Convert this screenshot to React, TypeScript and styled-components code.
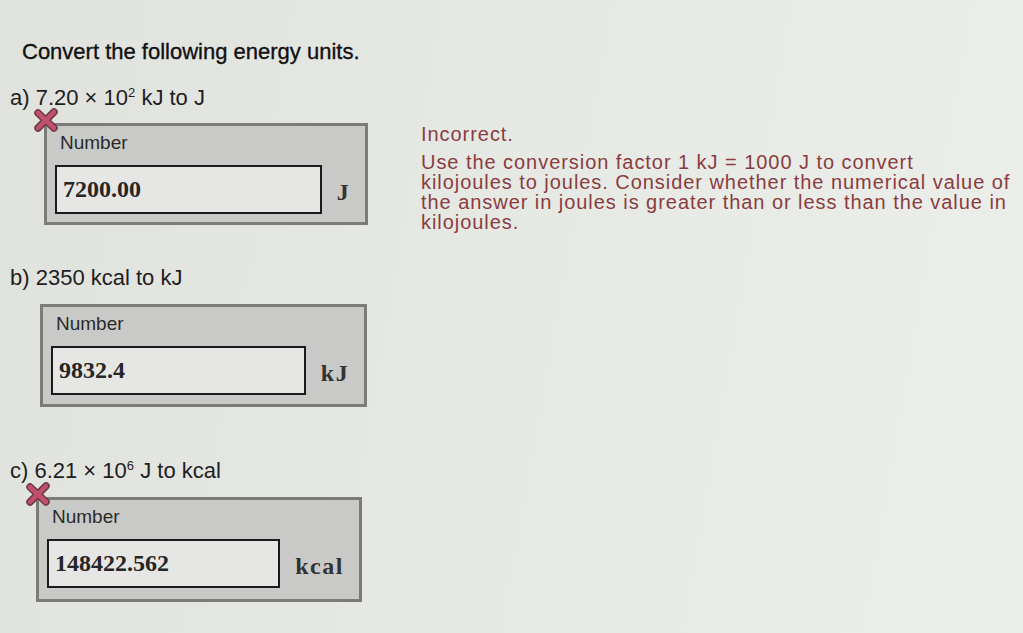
import React from "react";
import styled, { createGlobalStyle } from "styled-components";

const Global = createGlobalStyle`
  html, body { margin: 0; padding: 0; }
  body {
    background: #e3e5e1;
    font-family: "Liberation Sans", Arial, sans-serif;
    color: #1c1c1c;
  }
`;

const Page = styled.div`
  width: 1023px;
  height: 633px;
  overflow: hidden;
  padding: 40px 0 0 10px;
  box-sizing: border-box;
  background: linear-gradient(100deg, #e0e2de 0%, #e6e8e4 45%, #eceeea 100%);
`;

const Title = styled.h1`
  margin: 0 0 0 12px;
  font-size: 22px;
  line-height: 24px;
  font-weight: normal;
  color: #111;
  -webkit-text-stroke: 0.35px #111;
`;

const Item = styled.section<{ $top: number }>`
  margin-top: ${(p) => p.$top}px;
`;

const Question = styled.div`
  font-size: 22px;
  line-height: 22px;
  color: #1e1e1e;
  sup {
    font-size: 13px;
    line-height: 0;
    vertical-align: 8px;
  }
`;

const Row = styled.div<{ $indent: number; $gap: number }>`
  display: flex;
  align-items: flex-start;
  margin-top: ${(p) => p.$gap}px;
  padding-left: ${(p) => p.$indent}px;
`;

const Box = styled.div<{ $width: number; $bottom: number }>`
  position: relative;
  width: ${(p) => p.$width}px;
  box-sizing: border-box;
  background: #c9cac7;
  border: 3px solid #7b7c7a;
  padding: 6px 0 ${(p) => p.$bottom}px 8px;
  flex-shrink: 0;
`;

const Label = styled.div`
  font-size: 19px;
  line-height: 22px;
  color: #2a2a2a;
  margin: 0 0 11px 5px;
`;

const InputRow = styled.div`
  display: flex;
  align-items: center;
`;

const Field = styled.div<{ $width: number }>`
  width: ${(p) => p.$width}px;
  height: 49px;
  box-sizing: border-box;
  background: #e6e7e4;
  border: 2px solid #1b1b1b;
  display: flex;
  align-items: center;
  padding-left: 6px;
  font-family: "Liberation Serif", "Times New Roman", serif;
  font-weight: bold;
  font-size: 24px;
  color: #262626;
`;

const Unit = styled.div`
  flex: 1;
  text-align: center;
  font-family: "Liberation Serif", "Times New Roman", serif;
  font-weight: bold;
  font-size: 24px;
  letter-spacing: 1.5px;
  color: #333;
  padding-top: 6px;
`;

const Mark = styled.svg`
  position: absolute;
  left: -15px;
  top: -19px;
  width: 28px;
  height: 27px;
`;

const Feedback = styled.div`
  margin-left: 53px;
  margin-top: 1px;
  font-size: 20px;
  line-height: 20px;
  letter-spacing: 0.95px;
  color: #8a3c3e;
  p {
    margin: 0;
  }
  p:first-child {
    margin-bottom: 8px;
  }
`;

const XMark = () => (
  <Mark viewBox="0 0 28 27">
    <g strokeLinecap="round">
      <path d="M6 6 L22 21 M22 5 L6 21" stroke="#6e3a48" strokeWidth="7.5" />
      <path d="M6 6 L22 21 M22 5 L6 21" stroke="#c0506c" strokeWidth="4.5" />
    </g>
  </Mark>
);

export default function App() {
  return (
    <>
      <Global />
      <Page>
        <Title>Convert the following energy units.</Title>

        <Item $top={23}>
          <Question>
            a) 7.20 × 10<sup>2</sup> kJ to J
          </Question>
          <Row $indent={34} $gap={14}>
            <Box $width={324} $bottom={8}>
              <XMark />
              <Label>Number</Label>
              <InputRow>
                <Field $width={267}>7200.00</Field>
                <Unit>J</Unit>
              </InputRow>
            </Box>
            <Feedback>
              <p>Incorrect.</p>
              <p>
                Use the conversion factor 1 kJ = 1000 J to convert
                <br />
                kilojoules to joules. Consider whether the numerical value of
                <br />
                the answer in joules is greater than or less than the value in
                <br />
                kilojoules.
              </p>
            </Feedback>
          </Row>
        </Item>

        <Item $top={35}>
          <Question>b) 2350 kcal to kJ</Question>
          <Row $indent={30} $gap={15}>
            <Box $width={327} $bottom={9}>
              <Label>Number</Label>
              <InputRow>
                <Field $width={255}>9832.4</Field>
                <Unit>kJ</Unit>
              </InputRow>
            </Box>
          </Row>
        </Item>

        <Item $top={53}>
          <Question>
            c) 6.21 × 10<sup>6</sup> J to kcal
          </Question>
          <Row $indent={26} $gap={15}>
            <Box $width={326} $bottom={11}>
              <XMark />
              <Label>Number</Label>
              <InputRow>
                <Field $width={233}>148422.562</Field>
                <Unit>kcal</Unit>
              </InputRow>
            </Box>
          </Row>
        </Item>
      </Page>
    </>
  );
}
